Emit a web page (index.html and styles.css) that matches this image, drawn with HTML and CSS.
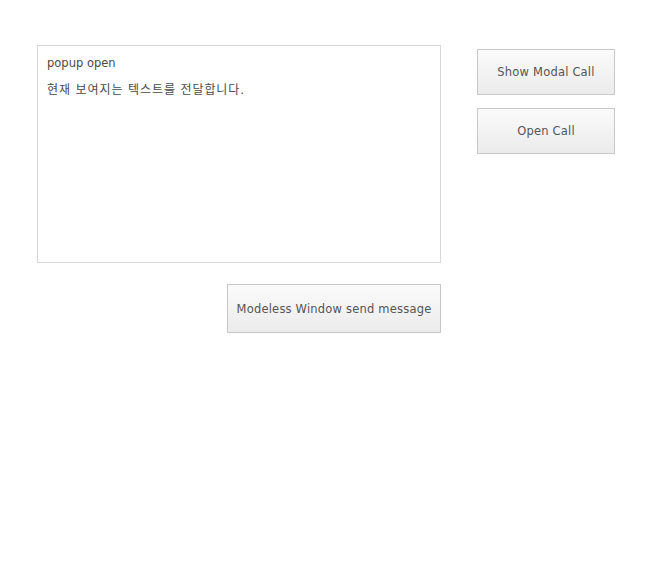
FILE: index.html
```html
<!DOCTYPE html>
<html lang="ko">
<head>
    <meta charset="UTF-8">
    <title>Popup</title>
    <link rel="stylesheet" href="styles.css">
</head>
<body>
    <div class="wrap">
        <div class="left">
            <div class="textbox" id="textbox">
                <p>popup open</p>
                <p class="ko">현재 보여지는 텍스트를 전달합니다.</p>
            </div>
            <div class="actions">
                <button class="btn btn-wide">Modeless Window send message</button>
            </div>
        </div>
        <div class="right">
            <button class="btn">Show Modal Call</button>
            <button class="btn">Open Call</button>
        </div>
    </div>
</body>
</html>
```

FILE: styles.css
```css
body {
    margin: 0;
    font-family: "DejaVu Sans", "Noto Sans CJK KR", sans-serif;
    font-size: 11.5px;
    color: #4a4a4a;
}
.wrap {
    display: flex;
    padding: 45px 0 0 37px;
}
.left {
    width: 404px;
}
.textbox {
    box-sizing: border-box;
    height: 218px;
    border: 1px solid #d6d6d6;
    padding: 9px 9px;
}
.textbox p {
    margin: 0 0 11px;
    line-height: 16px;
}
.textbox .ko {
    font-size: 12px;
    letter-spacing: 0.9px;
}
.actions {
    display: flex;
    justify-content: flex-end;
    margin-top: 21px;
}
.right {
    display: flex;
    flex-direction: column;
    gap: 13px;
    margin-left: 36px;
    padding-top: 4px;
}
.btn {
    width: 138px;
    height: 46px;
    border: 1px solid #c8c8c8;
    background: linear-gradient(#fbfbfb, #ebebeb);
    font-family: "DejaVu Sans", sans-serif;
    font-size: 11.5px;
    letter-spacing: 0.2px;
    color: #555;
    cursor: pointer;
}
.btn-wide {
    width: 214px;
    height: 49px;
}
```
